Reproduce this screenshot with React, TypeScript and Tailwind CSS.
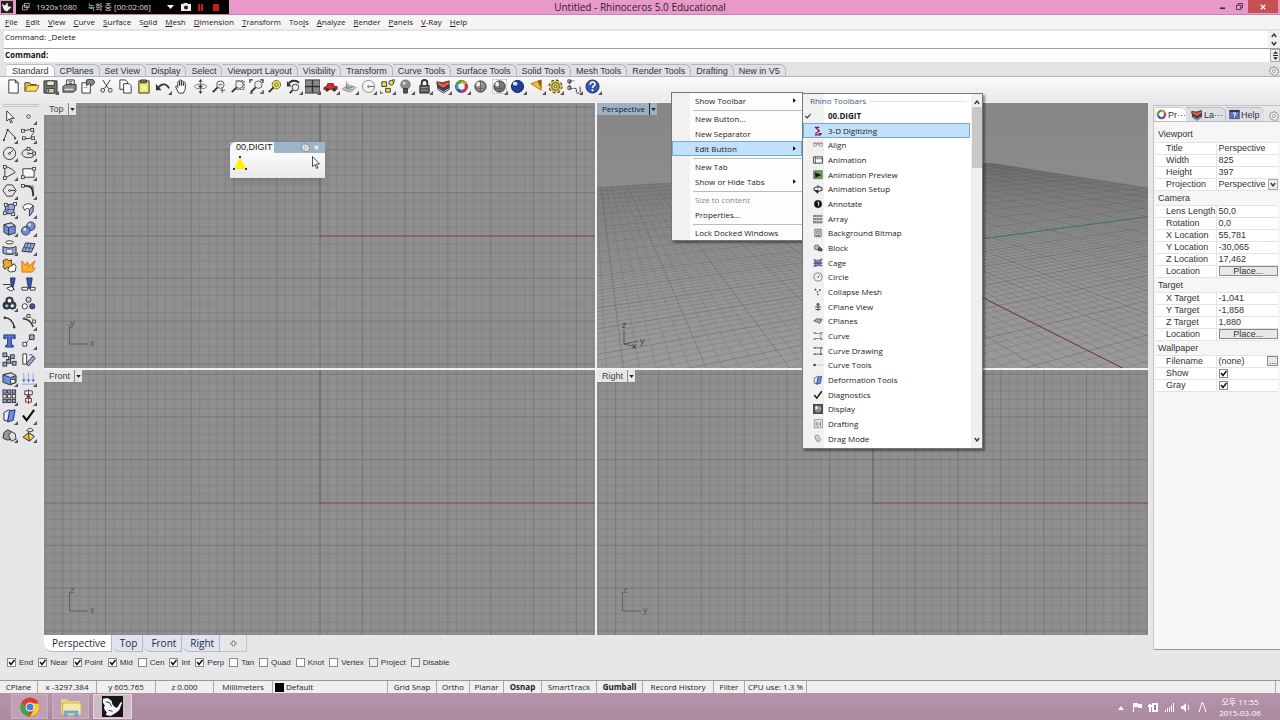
import type { ReactNode } from "react";
import clsx from "clsx";

const MENUS = ["File", "Edit", "View", "Curve", "Surface", "Solid", "Mesh", "Dimension", "Transform", "Tools", "Analyze", "Render", "Panels", "V-Ray", "Help"];
// position of the underlined access key in each menu label
const ACCESS_KEYS = [0, 0, 0, 0, 0, 1, 0, 0, 0, 3, 0, 0, 0, 0, 0];

const TOOL_TABS = ["Standard", "CPlanes", "Set View", "Display", "Select", "Viewport Layout", "Visibility", "Transform", "Curve Tools", "Surface Tools", "Solid Tools", "Mesh Tools", "Render Tools", "Drafting", "New in V5"];

const UI = "font-['Open_Sans','Noto_Sans_CJK_KR',sans-serif]";
const GULIM = "font-['Liberation_Sans',sans-serif]";

/* ---------- icons ---------- */

const K = "#333";

function Ico({ children, size = "size-[15px]" }: { children: ReactNode; size?: string }) {
    return (
        <svg viewBox="0 0 16 16" className={clsx("shrink-0", size)} fill="none" stroke={K} strokeWidth="1" aria-hidden="true">
            {children}
        </svg>
    );
}

const sphere = (fill: string) => (
    <>
        <circle cx="8" cy="8" r="6" fill={fill} />
        <path d="M8 2v12M2.500 9c3 2 8 2 11 0" stroke="#555" strokeWidth=".8" />
        <ellipse cx="5.500" cy="5.500" rx="2" ry="2.500" fill="#fff" stroke="none" opacity=".85" />
    </>
);

const colorWheel = (
    <g strokeWidth="3">
        <path d="M8 3a5 5 0 0 1 4.300 2.500" stroke="#e8a020" />
        <path d="M12.300 5.500a5 5 0 0 1 0 5" stroke="#d33" />
        <path d="M12.300 10.500A5 5 0 0 1 8 13" stroke="#c02a9a" />
        <path d="M8 13a5 5 0 0 1-4.300-2.500" stroke="#2b48c8" />
        <path d="M3.700 10.500a5 5 0 0 1 0-5" stroke="#28a8b0" />
        <path d="M3.700 5.500A5 5 0 0 1 8 3" stroke="#4bb034" />
        <circle cx="8" cy="8" r="6.500" strokeWidth=".7" />
    </g>
);

const layers = (
    <>
        <path d="M2 8v3l6 4 6-4V8" fill="#e4e4e4" />
        <path d="M1 4l1 5 6 4 6-4V6" fill="#234a9c" />
        <path d="M1 3l6 1 7-2v4l-6 4-6-3z" fill="#e0401c" />
        <path d="M2 4l6 4 6-4" stroke="#f7a58c" strokeWidth=".8" />
    </>
);

const gear = (
    <>
        <path
            d="M7 1h2l.5 2 1.500.6 1.800-1 1.400 1.400-1 1.800.6 1.500 2 .5v2l-2 .5-.6 1.500 1 1.800-1.400 1.400-1.800-1-1.500.6L9 15H7l-.5-2-1.500-.6-1.800 1-1.400-1.400 1-1.800L2.200 9 .5 8.500v-2L2.500 6l.6-1.200-1-1.800 1.400-1.400 1.800 1L6.500 3z"
            fill="#f4f4f4"
            stroke="#666"
        />
        <circle cx="8" cy="8" r="2.500" stroke="#777" />
    </>
);

const lens = <><circle cx="10" cy="6" r="4" fill="#e9eef2" stroke="#555" /><path d="M7 9l-5 5" strokeWidth="2" /></>;

const TOP_ICONS: { name: string; art: ReactNode; fly?: boolean }[] = [
    { name: "New", art: <path d="M3 1h7l3 3v11H3zM10 1v3h3" fill="#fff" /> },
    { name: "Open", art: <><path d="M1 13V4h5l1 2h6v2" fill="#f6c94a" /><path d="M1 13l3-6h12l-3 6z" fill="#fbe060" stroke="#8a6a12" /></> },
    { name: "Save", fly: true, art: <><path d="M1 2h14v13H1z" fill="#76796b" /><path d="M4 2h8v5H4z" fill="#e9e9dc" /><path d="M4 10h8v5H4z" fill="#c9cbb9" /><path d="M6 11v3" /></> },
    { name: "Print", art: <><path d="M5 7V1h8v6" fill="#fff" /><path d="M1 8l3-2h11v6l-3 2H1z" fill="#8c8c8c" /><path d="M3 11h9" stroke="#fff" /><path d="M7 3h4M7 5h4" /></> },
    { name: "Properties", art: <><path d="M2 4h9v11H2z" fill="#fff" /><path d="M7 1l6-1 3 3-3 4-3-2-3 2z" fill="#888" /><path d="M4 9h4" stroke="#999" /></> },
    { name: "Cut", art: <><path d="M4 1l6 9M12 1L6 10" /><circle cx="4" cy="12" r="2" /><circle cx="12" cy="12" r="2" /></> },
    { name: "Copy", art: <><path d="M2 1h6l2 2v8H2z" fill="#fff" /><path d="M6 5h6l2 2v8H6z" fill="#fff" /></> },
    { name: "Paste", art: <><path d="M3 2h11v13H3z" fill="#e6dc44" /><path d="M5 1h6v3H5z" fill="#777" /><path d="M5 6h7v7H5z" fill="#f5ee9a" stroke="none" /></> },
    { name: "Undo", fly: true, art: <><path d="M4 9c2-4 8-5 11 1" strokeWidth="2" /><path d="M1 5v7h6z" fill={K} stroke="none" /></> },
    { name: "Pan", art: <path d="M5 15L2 9c-1-2 1-2 2 0V4c0-2 2-2 2 0v3-5c0-2 2-1 2 0v5-4c0-2 2-1 2 0v4-3c1-1 2-1 2 1v6l-2 4z" fill="#fff" /> },
    { name: "Rotate View", art: <><path d="M8 1v14" stroke="#777" /><ellipse cx="8" cy="8" rx="6.500" ry="2.500" stroke="#777" /><path d="M6 3l2-3 2 3zM6 13l2 3 2-3z" fill={K} stroke="none" /><path d="M6 8h4M8 6v4" strokeWidth="1.500" /></> },
    { name: "Zoom Dynamic", art: <>{lens}<path d="M8 6h4M10 12h5M12 10v5" strokeWidth=".8" /></> },
    { name: "Zoom Window", art: <><path d="M6 2h9v9H6" strokeDasharray="2 1" />{lens}</> },
    { name: "Zoom Extents", art: <>{lens}<path d="M1 4V1h3M12 1h3v3M15 12v3h-3M4 15H1" strokeWidth="1.400" /></> },
    { name: "Zoom Selected", art: <><circle cx="10" cy="6" r="4.500" fill="#f4ee2e" stroke="#666" /><circle cx="10" cy="6" r="2" fill="#d7cf52" stroke="#777" /><path d="M7 9l-5 5" strokeWidth="2" /></> },
    { name: "Undo View", fly: true, art: <><path d="M3 5c2-4 8-4 11-1" strokeWidth="2" /><path d="M1 2v6h5z" fill={K} stroke="none" /><circle cx="10" cy="9" r="3.500" fill="#eee" /><path d="M7 12l-3 3" strokeWidth="2" /></> },
    { name: "Four Viewports", fly: true, art: <><path d="M0 1h16v14H0z" fill="#8a8a8a" /><path d="M0 8h16M8 1v14" strokeWidth="1.500" /></> },
    { name: "Right View", fly: true, art: <><path d="M1 9l3-1 1-3h6l1 3h3v3H1z" fill="#d43030" stroke="#7c1414" /><circle cx="4.500" cy="11.500" r="1.500" fill="#333" /><circle cx="12" cy="11.500" r="1.500" fill="#333" /></> },
    { name: "Set CPlane", fly: true, art: <><path d="M0 11l6-5 9 3-6 5z" fill="#ccc" stroke="#999" /><path d="M3 9l9 3M8 7l-5 5M11 8l-5 5" stroke="#888" strokeWidth=".7" /><path d="M5 3v7l7-2" stroke="#777" /></> },
    { name: "Circle Tool", fly: true, art: <><circle cx="8" cy="8" r="6.500" stroke="#888" /><circle cx="8" cy="8" r="1" stroke="#666" /><path d="M8 8h6" stroke="#666" /></> },
    { name: "Select", fly: true, art: <><path d="M2 3h5v5H2z" fill="#f3e235" /><circle cx="12" cy="4" r="2.500" fill="#f3e235" /><path d="M6 10h5v4H6z" fill="#f3e235" /><path d="M0 15v-3M0 15h3M13 1h3v3" /></> },
    { name: "Hide", fly: true, art: <><circle cx="8" cy="6" r="5" fill="#8d8d8d" stroke="#666" /><path d="M6 10h4v5H6z" fill="#555" /><circle cx="6.500" cy="4.500" r="1.500" fill="#ddd" stroke="none" /></> },
    { name: "Lock", fly: true, art: <><path d="M5 8V4c0-4 6-4 6 0v4" strokeWidth="2" /><path d="M3 7h10v8H3z" fill="#555" /><path d="M4 9h8M4 12h8" stroke="#999" /></> },
    { name: "Layers", fly: true, art: layers },
    { name: "Object Color", fly: true, art: colorWheel },
    { name: "Shade", art: sphere("#8f8f8f") },
    { name: "Shaded Viewport", fly: true, art: <><rect x=".5" y=".5" width="15" height="15" stroke="#aaa" strokeDasharray="1 1" />{sphere("#777")}</> },
    { name: "Render", fly: true, art: <><circle cx="8" cy="8" r="6.500" fill="#1d3f9e" stroke="#0d1c4f" /><ellipse cx="5.500" cy="5" rx="2.500" ry="2" fill="#dfe9ff" stroke="none" /></> },
    { name: "Spotlight", fly: true, art: <><path d="M2 5l11-4v11z" fill="#f0b93a" stroke="#b67b12" /><path d="M9 2l4-1v9z" fill="#8b5a1a" stroke="none" /></> },
    { name: "Options", fly: true, art: <><circle cx="8" cy="8" r="5.500" strokeWidth="4" strokeDasharray="2.300 2" /><circle cx="8" cy="8" r="5.500" strokeWidth="2" stroke="#e2c93b" /><circle cx="8" cy="8" r="4" fill="#e8d768" stroke="#665a10" /><circle cx="8" cy="8" r="1.500" fill="#fff" /></> },
    { name: "Dimension", fly: true, art: <><path d="M3 2v8M3 2h5M3 10h7v5h5" strokeDasharray="3 1" /><path d="M1 1h3v3H1zM1 8h3v3H1zM14 8v6" /></> },
    { name: "Help", fly: true, art: <><circle cx="8" cy="8" r="7" fill="#3a55b4" stroke="#1b2c70" /><path d="M5.500 6c0-4 6-3.500 5 0-.4 1.500-2.500 1.500-2.500 3.500M8 11v2" stroke="#fff" strokeWidth="1.800" /></> },
];

const node = (x: number, y: number) => <rect key={`${x}-${y}`} x={x - 1.5} y={y - 1.5} width="3" height="3" fill="#fff" strokeWidth=".9" />;
const curveArt = <><path d="M3 4c12-3 12 0 9 4s2 5-9 4" />{node(2, 4)}{node(12, 3)}{node(13, 12)}{node(3, 12)}</>;
const BLUE = "#93a9e6";
const deform = <><path d="M2 5l5-3 2 1-3 11-4-1z" fill="#e4e8f6" /><path d="M8 3l6-1-2 11-6 2z" fill="#6e8be0" stroke="#1d2f75" /></>;

const SIDE_ICONS: { name: string; art: ReactNode; fly?: boolean }[] = [
    { name: "Pointer", art: <path d="M5 2v11l2.500-2.500 2 4.500 1.500-1-2-4h4z" fill="#fff" /> },
    { name: "Point", fly: true, art: <circle cx="8" cy="8" r="1.800" fill="#fff" /> },
    { name: "Polyline", fly: true, art: <><path d="M2 14L6 3l8 8" /><path d="M1 13h2v2H1zM5 2h2v2H5zM13 11h2v2h-2z" fill={K} stroke="none" /></> },
    { name: "Curve", fly: true, art: curveArt },
    { name: "Circle", fly: true, art: <><circle cx="8" cy="8" r="6.500" /><path d="M8 8l4-4" /><circle cx="8" cy="8" r="1" fill="#fff" /></> },
    { name: "Ellipse", fly: true, art: <><ellipse cx="8" cy="8" rx="7" ry="4.500" />{node(8, 3)}<path d="M8 8h5" /><circle cx="8" cy="8" r="1" fill="#fff" />{node(14, 8)}</> },
    { name: "Arc", fly: true, art: <><path d="M3 2v12M3 2c5 0 9 3 11 6L3 14" />{node(3, 2)}{node(3, 14)}</> },
    { name: "Rectangle", fly: true, art: <><path d="M2 4h12v9H2z" fill="#f7f7f7" />{node(2, 13)}{node(14, 4)}</> },
    { name: "Polygon", fly: true, art: <><path d="M5 2h6l4 6-4 6H5L1 8z" /><path d="M8 8h6" /><circle cx="8" cy="8" r="1" fill="#fff" /></> },
    { name: "Fillet", fly: true, art: <><path d="M2 3h3c6 0 8 3 8 11" strokeWidth="2" />{node(2, 3)}<path d="M8 3h5v5" strokeDasharray="2 1" /></> },
    { name: "Surface Points", fly: true, art: <><path d="M4 3l10-1-2 11-9-1z" fill={BLUE} /><path d="M7 3L6 13M3 8h10" strokeWidth=".6" />{node(4, 3)}{node(14, 2)}{node(12, 13)}{node(3, 12)}</> },
    { name: "Surface Sweep", fly: true, art: <><path d="M2 5c3-4 7-4 11-1l-4 4c-2-2-4-1-5 1z" fill="#fff" /><path d="M13 4v6l-4 5V8z" fill={BLUE} /></> },
    { name: "Box", fly: true, art: <><path d="M2 4l8-2 4 3v8l-7 2-5-3z" fill="#6f8ee0" /><path d="M2 4l8-2 4 3-7 2z" fill="#c3d0f7" /><path d="M7 7v8" /></> },
    { name: "Boolean Union", fly: true, art: <><circle cx="10.500" cy="5.500" r="4.500" fill="#6f8ee0" /><circle cx="5" cy="10.500" r="4.500" fill="#6f8ee0" /><circle cx="9" cy="4" r="1.500" fill="#e5ecff" stroke="none" /><circle cx="4" cy="9" r="1.500" fill="#e5ecff" stroke="none" /></> },
    { name: "Loft", fly: true, art: <><ellipse cx="8" cy="2.500" rx="4" ry="1.700" fill="#fff" /><path d="M1 7c4 2 10 2 14 0v7c-4 2-10 2-14 0z" fill={BLUE} /><path d="M5 10h6v4H5z" fill="#fff" strokeWidth=".6" /></> },
    { name: "Patch", fly: true, art: <><path d="M5 3l10 1-4 9-10-1z" fill={BLUE} /><path d="M8 3.500L4 12M11 3.500L8 13M3 8l10 1" strokeWidth=".7" /></> },
    { name: "Join", art: <><path d="M1 3l4-2 2 2 3-1v4l2 1-3 4-3-1-3 2-2-3 1-2z" fill="#f1a92b" /><path d="M8 9l3-1 2-2 2 3-1 5-5 1-3-2z" fill="#fff" /></> },
    { name: "Explode", art: <path d="M1 15V3l4 5 2-4 1 5 7-6-3 7 3 1-3 4z" fill="#ffb32c" stroke="#e2660c" /> },
    { name: "Trim", art: <><path d="M9 1h5l-2 10h-2z" fill="#2f55c8" /><path d="M1 8h8l4 6" /><path d="M5 12l5-2 3 3-4 2z" fill="#fff" /></> },
    { name: "Split", art: <><path d="M6 1h6l-2 11H8z" fill="#2f55c8" /><path d="M1 11h6v3H1zM10 11h5v3h-5z" fill="#fff" /></> },
    { name: "Group", fly: true, art: <><circle cx="8" cy="5" r="4" fill="#345" /><circle cx="5" cy="10" r="4" fill="#234" /><circle cx="11" cy="10" r="4" fill="#345" /><circle cx="8" cy="5" r="2" fill="#fff" stroke="none" /><circle cx="5" cy="10.500" r="1.800" fill="#9fb4f0" stroke="none" /><circle cx="11" cy="10.500" r="1.800" fill="#fff" stroke="none" /></> },
    { name: "Ungroup", art: <><circle cx="8" cy="4" r="2.800" fill="#b9c6f2" /><circle cx="4" cy="11" r="2.800" fill="#fff" /><circle cx="12" cy="11" r="2.800" fill="#3c56a8" /></> },
    { name: "Edit Curve", art: <><path d="M3 4c5 0 9 4 10 10" strokeWidth="1.500" /><circle cx="3" cy="4" r="1" fill={K} /><circle cx="13" cy="14" r="1" fill={K} /></> },
    { name: "Control Points", fly: true, art: <><path d="M2 5c5 0 9 3 11 9" strokeWidth="1.500" /><path d="M2 5l6-4 6 6" strokeDasharray="1 1" />{node(8, 2)}{node(14, 8)}</> },
    { name: "Text", art: <path d="M2 2h12v4h-2l-1-1h-1v8h2v2H4v-2h2V5H5L4 6H2z" fill="#5578d8" stroke="#1d2f75" /> },
    { name: "Move", fly: true, art: <><path d="M9 2h5v5H9z" fill={BLUE} /><path d="M2 10h4v4H2z" fill="#fff" /><path d="M6 10l4-4" strokeDasharray="2 1" /></> },
    { name: "Copy Objects", art: <>{[[1, 1], [9, 3], [5, 8], [11, 10], [1, 11]].map(([x, y]) => <rect key={`${x}${y}`} x={x} y={y} width="4" height="4" fill={BLUE} />)}<path d="M5 4l4 2M7 8v-3M9 11l2 1" /></> },
    { name: "Rotate", art: <><path d="M2 2h4v11H2z" fill="#fff" /><path d="M6 12l7-8 2 3-7 8z" fill={BLUE} /><path d="M9 3h3" /></> },
    { name: "Solid Edit", fly: true, art: <><path d="M1 4l9-2 5 3v7l-6 3-8-3z" fill="#6f8ee0" /><path d="M1 4l9-2 5 3-6 2z" fill="#d2dcfa" /><path d="M9 9h5v4H9z" fill="#fff" /></> },
    { name: "Project", fly: true, art: <><path d="M3 2v8M8 2v8M13 2v8" stroke="#8aa6e8" /><path d="M1 9l2 3 2-3zM6 9l2 3 2-3zM11 9l2 3 2-3z" fill="#4c6ed6" stroke="none" /><path d="M1 14h14" stroke="#8aa6e8" /></> },
    { name: "Array", fly: true, art: <>{[1, 6, 11].flatMap((y) => [1, 6, 11].map((x) => <rect key={`${x}${y}`} x={x} y={y} width="3.500" height="3.500" fill={y === 6 ? "#fff" : BLUE} />))}</> },
    { name: "Align", fly: true, art: <><path d="M4 2h4v4H4zM8 2h4v4H8zM5 10h6v4H5z" fill="#fff" /><path d="M8 0v16" stroke="#d22" /><path d="M6 8h4" strokeWidth="2" /></> },
    { name: "Deform", fly: true, art: deform },
    { name: "Check", fly: true, art: <path d="M2 8l4 5 8-11" strokeWidth="2.200" stroke="#111" /> },
    { name: "Block", fly: true, art: <><path d="M1 12l1-6 4-3 4 2v8l-4 1z" fill="#999" /><path d="M7 9l3-4 4 2 1 6-5 2z" fill="#ddd" /></> },
    { name: "Dimension Tools", fly: true, art: <><path d="M2 11l6-5 6 4-5 5z" fill="#f1b73b" /><path d="M8 6l6 4-5 5z" fill="#fbe08b" /><path d="M6 4c3-4 6-3 7 0l-3 1z" fill="#eee" /></> },
];

const MENU_ICONS: { name: string; art: ReactNode }[] = [
    { name: "3-D Digitizing", art: <path d="M3 2h7M4 2l6 6-6 4M3 14h10M9 12h5" stroke="#8a1240" strokeWidth="2" /> },
    { name: "Align", art: <><path d="M0 5h16" stroke="#c33" /><path d="M1 5h4v5H1zM6 5h4v3H6zM11 5h4v5h-4z" stroke="#888" /></> },
    { name: "Animation", art: <><path d="M1 3h14v10H1z" fill="#fff" strokeWidth="1.500" /><path d="M4 3v10M4 6h11" /></> },
    { name: "Animation Preview", art: <><path d="M1 1h14v13H1z" fill="#6ea255" stroke="#4b6e3a" /><path d="M3 4l10 4-9 4z" fill="#111" /></> },
    { name: "Animation Setup", art: <><ellipse cx="8" cy="8" rx="6.500" ry="3.500" strokeWidth="1.700" /><path d="M8 1v6M8 15l-4-3 4-3z" fill="#111" /></> },
    { name: "Annotate", art: <><circle cx="8" cy="8" r="6" fill="#111" /><path d="M7 5h2v6" stroke="#fff" strokeWidth="1.500" /></> },
    { name: "Array", art: <>{[2, 7, 12].flatMap((y) => [1, 6, 11].map((x) => <rect key={`${x}${y}`} x={x} y={y} width="3.500" height="2.500" fill="#999" stroke="#777" />))}</> },
    { name: "Background Bitmap", art: <><path d="M3 2h10v12H3z" fill="#ddd" /><circle cx="8" cy="7" r="2.500" /><path d="M5 12h6" /></> },
    { name: "Block", art: <><circle cx="6" cy="7" r="4" fill="#bbb" /><path d="M8 12l2-6 5 4-1 3z" fill="#555" /></> },
    { name: "Cage", art: <><path d="M3 4l10-1-1 9-9 1z" fill="#7f86b8" stroke="#444b7c" /><path d="M1 3h3M12 2h3M1 13h3M12 12h3M1 8h14" stroke="#444b7c" strokeWidth="2" /></> },
    { name: "Circle", art: <><circle cx="8" cy="8" r="6.500" stroke="#444" /><path d="M8 8l3-3M7 8h3" /></> },
    { name: "Collapse Mesh", art: <><circle cx="4" cy="4" r="1" fill="#446" /><circle cx="11" cy="5" r="1" fill="#446" /><path d="M6 7l2 2" stroke="#446" strokeWidth="2" /><circle cx="8" cy="12" r=".8" fill="#446" /></> },
    { name: "CPlane View", art: <><circle cx="8" cy="4" r="2" fill="#777" /><path d="M8 6v8M3 8h10M4 12h8" strokeWidth="1.500" stroke="#444" /></> },
    { name: "CPlanes", art: <><path d="M1 8l5-4 9 1-4 7z" fill="#777" stroke="#666" /><path d="M4 6l8 4M8 4l-3 5M12 5l-4 5" stroke="#ddd" /></> },
    { name: "Curve", art: <g stroke="#555"><path d="M3 4h8c4 0 0 5 2 8H3" /><path d="M1 3h3M12 3h3M1 13h3M12 13h3" strokeWidth="2" /></g> },
    { name: "Curve Drawing", art: <g stroke="#444"><path d="M3 3h9c3 0-2 7 1 10H3" strokeWidth="1.300" /><path d="M1 3h3M12 3h3M1 13h3M12 13h3" strokeWidth="2.200" /></g> },
    { name: "Curve Tools", art: <><path d="M1 7h3v2H1z" fill="#111" /><path d="M6 8h10" stroke="#888" strokeDasharray="2 1" /></> },
    { name: "Deformation Tools", art: deform },
    { name: "Diagnostics", art: <path d="M2 8l4 5 8-11" strokeWidth="2.200" stroke="#111" /> },
    { name: "Display", art: <><path d="M0 0h16v16H0z" fill="#555" stroke="#333" />{sphere("#aaa")}</> },
    { name: "Drafting", art: <><path d="M2 1h13v13H2z" fill="#f2f2f2" stroke="#666" /><path d="M5 4v8M12 4v8M5 8h7M8 4v2M8 10v3" stroke="#555" /></> },
    { name: "Drag Mode", art: <><path d="M3 3l5-1 4 7-3 4-4-3z" fill="#eee" stroke="#555" /><path d="M6 5l3 6" stroke="#666" /></> },
];

/* ---------- viewport drawings ---------- */

const EXTENT = 70;
const UNIT = 8.56;
const STEPS = Array.from({ length: EXTENT * 2 + 1 }, (_, i) => i - EXTENT);

const flatPath = (major: boolean) =>
    STEPS.filter((n) => n !== 0 && (n % 5 === 0) === major)
        .map((n) => `M${n * UNIT} ${-EXTENT * UNIT}V${EXTENT * UNIT}M${-EXTENT * UNIT} ${n * UNIT}H${EXTENT * UNIT}`)
        .join("");
const FLAT_MINOR = flatPath(false);
const FLAT_MAJOR = flatPath(true);

// Perspective camera, 50 mm lens, looking at the target
const CAM = [55.781, -30.065, 17.462];
const FWD = [-0.8699, 0.4318, -0.2385];
const RIGHT = [0.4446, 0.8957, 0];
const UP = [-0.2136, 0.106, 0.9711];
const FOCAL = 552;
const NEAR = 3;

function toCamera(x: number, y: number) {
    const d = [x - CAM[0], y - CAM[1], -CAM[2]];
    const dot = (v: number[]) => d[0] * v[0] + d[1] * v[1] + d[2] * v[2];
    return [dot(RIGHT), dot(UP), dot(FWD)];
}

function project(x1: number, y1: number, x2: number, y2: number) {
    let a = toCamera(x1, y1);
    let b = toCamera(x2, y2);
    if (a[2] < NEAR && b[2] < NEAR) return "";
    const clip = (p: number[], q: number[]) => {
        const t = (NEAR - p[2]) / (q[2] - p[2]);
        return p.map((v, i) => v + (q[i] - v) * t);
    };
    if (a[2] < NEAR) a = clip(a, b);
    if (b[2] < NEAR) b = clip(b, a);
    const px = (p: number[]) => `${((p[0] / p[2]) * FOCAL).toFixed(1)} ${((-p[1] / p[2]) * FOCAL).toFixed(1)}`;
    return `M${px(a)}L${px(b)}`;
}

const perspPath = (major: boolean) =>
    STEPS.filter((n) => (n % 5 === 0) === major)
        .map((n) => project(n, -EXTENT, n, EXTENT) + project(-EXTENT, n, EXTENT, n))
        .join("");
const PERSP_MINOR = perspPath(false);
const PERSP_MAJOR = perspPath(true);

function FlatGrid({ h, v }: { h: string; v: string }) {
    return (
        <svg className="block size-full bg-[#8f8f8f]" aria-hidden="true">
            <svg x="50%" y="50%" overflow="visible" fill="none">
                <path d={FLAT_MINOR} stroke="#848484" />
                <path d={FLAT_MAJOR} stroke="#787878" />
                <path d="M-600 .500H0M.500 0V600" stroke="#707070" />
                <path d="M0 .500H600" stroke="#7c3e46" />
                <path d="M.500 0V-600" stroke="#3d6b3f" />
            </svg>
            <svg x="0" y="100%" overflow="visible" fill="none" stroke="#5f5f5f">
                <path d="M25.500-43v19H44" />
                <text x="26" y="-42" fill="#555" stroke="none" className="font-['Liberation_Sans'] text-[9px]">{v}</text>
                <text x="46" y="-22" fill="#555" stroke="none" className="font-['Liberation_Sans'] text-[9px]">{h}</text>
            </svg>
        </svg>
    );
}

function PerspectiveGrid() {
    return (
        <svg className="block size-full bg-linear-to-b from-[#868686] to-[#9a9a9a]" aria-hidden="true">
            <svg x="50%" y="50%" overflow="visible" fill="none">
                <path d={PERSP_MINOR} stroke="#5c5c5c" strokeOpacity=".24" />
                <path d={PERSP_MAJOR} stroke="#4c4c4c" strokeOpacity=".32" />
                <path d={project(0, 0, EXTENT, 0)} stroke="#7c2f38" />
                <path d={project(0, 0, 0, EXTENT)} stroke="#3d7a45" />
            </svg>
            <svg x="0" y="100%" overflow="visible" fill="none" stroke="#555">
                <path d="M27-38v14l12 3M27-24l14-3" />
                <text x="25" y="-40" fill="#444" stroke="none" className="font-['Liberation_Sans'] text-[9px]">z</text>
                <text x="43" y="-24" fill="#444" stroke="none" className="font-['Liberation_Sans'] text-[9px]">y</text>
                <text x="35" y="-19" fill="#444" stroke="none" className="font-['Liberation_Sans'] text-[9px]">x</text>
            </svg>
        </svg>
    );
}

function Viewport({ title, active, children }: { title: string; active?: boolean; children: ReactNode }) {
    return (
        <section className="relative min-h-0 min-w-0 overflow-hidden">
            <div className="absolute inset-0">{children}</div>
            <button
                className={clsx(
                    "absolute left-0 top-0 flex h-3 items-center gap-[4px] pl-[5px] leading-3",
                    active ? `bg-[#9fb0c3] text-[8px] text-[#101c33] ${UI}` : `bg-[#e6e6e6] text-[9px] text-[#444] ${GULIM}`
                )}
            >
                {title}
                <span className={clsx("flex h-3 w-2 items-center justify-center border-l", active ? "border-[#223]" : "border-[#888]")}>
                    <svg viewBox="0 0 6 4" className="h-[3px] w-[5px]" aria-hidden="true"><path d="M0 0h6L3 4z" fill="#222" /></svg>
                </span>
            </button>
        </section>
    );
}

/* ---------- shared controls ---------- */

function Tick({ label, checked, dim, children }: { label: string; checked?: boolean; dim?: boolean; children?: ReactNode }) {
    return (
        <label className="flex items-center gap-[3px]">
            <span className="grid">
                <input
                    type="checkbox"
                    aria-label={label}
                    defaultChecked={checked}
                    className={clsx("peer col-start-1 row-start-1 size-[9px] appearance-none border border-[#888]", dim ? "bg-[#eee]" : "bg-white")}
                />
                <svg viewBox="0 0 9 9" className="pointer-events-none invisible col-start-1 row-start-1 size-[9px] peer-checked:visible" aria-hidden="true">
                    <path d="M2 4l2 2.500L7.500 2" fill="none" stroke="#111" strokeWidth="1.500" />
                </svg>
            </span>
            {children}
        </label>
    );
}

function IconButton({ name, art, fly }: { name: string; art: ReactNode; fly?: boolean }) {
    return (
        <button aria-label={name} className="relative grid h-[18px] w-[18px] place-items-center">
            <Ico>{art}</Ico>
            {fly && (
                <svg viewBox="0 0 4 4" className="absolute bottom-0 right-0 size-1" aria-hidden="true">
                    <path d="M4 0v4H0z" fill="#555" />
                </svg>
            )}
        </button>
    );
}

function Gear() {
    return <button aria-label="Panel options" className="shrink-0"><Ico size="size-[10px]">{gear}</Ico></button>;
}

/* ---------- window chrome ---------- */

function TitleBar() {
    return (
        <header className="flex h-[15px] shrink-0 items-start border-b border-[#b98aa6] bg-[#e899c9] leading-[14px]">
            <div className="flex flex-1 items-center">
                <svg viewBox="0 0 16 16" className="ml-px mr-[3px] size-3" aria-hidden="true">
                    <path d="M0 0h16v16H0z" fill="#222" />
                    <path d="M1 4l4 2 4-4v5l5 1-6 6-4-2z" fill="#f2f2f2" />
                </svg>
                <div className={`flex h-[14px] w-[213px] items-center bg-black text-[8px] text-[#ddd] ${UI}`}>
                    <svg viewBox="0 0 10 10" className="ml-[6px] mr-[6px] size-2" fill="none" stroke="#ccc" aria-hidden="true">
                        <path d="M3 .500h6v5H3zM.500 3.500h6v5h-6z" />
                    </svg>
                    <span>1920x1080</span>
                    <span className="ml-[11px]">녹화 중 [00:02:06]</span>
                    <svg viewBox="0 0 60 10" className="ml-auto mr-[8px] h-[10px] w-[60px]" aria-hidden="true">
                        <path d="M6 3h7l-3.500 4z" fill="#fff" />
                        <path d="M20 2h2l1-1h3l1 1h3v7H20z" fill="#eee" />
                        <circle cx="25" cy="5.500" r="2" fill="#222" />
                        <path d="M37 2h2v7h-2zM40 2h2v7h-2zM52 2h6v7h-6z" fill="#d01818" />
                    </svg>
                </div>
            </div>
            <h1 className={`text-[10px] text-[#2c1c28] ${UI}`}>Untitled - Rhinoceros 5.0 Educational</h1>
            <div className="flex flex-1 justify-end">
                <button aria-label="Minimize" className="grid h-[13px] w-[17px] place-items-center">
                    <svg viewBox="0 0 8 8" className="size-[7px]" aria-hidden="true"><path d="M1 5h6v2H1z" fill="#4c2f42" /></svg>
                </button>
                <button aria-label="Restore" className="grid h-[13px] w-[17px] place-items-center">
                    <svg viewBox="0 0 8 8" className="size-[7px]" fill="none" stroke="#3c2434" aria-hidden="true"><path d="M2.500 2V.500h5v5H6M.500 2.500h5v5h-5z" /></svg>
                </button>
                <button aria-label="Close" className="mr-0.5 grid h-[13px] w-[30px] place-items-center bg-[#c75050]">
                    <svg viewBox="0 0 8 8" className="size-[6px]" stroke="#fff" strokeWidth="1.500" aria-hidden="true"><path d="M1 1l6 6M7 1L1 7" /></svg>
                </button>
            </div>
        </header>
    );
}

function MenuBar() {
    return (
        <nav className={`flex h-[14px] shrink-0 items-center gap-2 bg-[#f4f4f4] pl-[5px] text-[8px] text-[#222] ${UI}`}>
            {MENUS.map((m, i) => (
                <button key={m}>
                    {m.slice(0, ACCESS_KEYS[i])}
                    <u>{m[ACCESS_KEYS[i]]}</u>
                    {m.slice(ACCESS_KEYS[i] + 1)}
                </button>
            ))}
        </nav>
    );
}

function Chevron({ up }: { up?: boolean }) {
    return (
        <svg viewBox="0 0 8 6" className="h-[5px] w-[6px]" fill="none" stroke="#333" strokeWidth="1.700" aria-hidden="true">
            <path d={up ? "M1 5l3-4 3 4" : "M1 1l3 4 3-4"} />
        </svg>
    );
}

function CommandLine() {
    return (
        <div className={`shrink-0 bg-[#e4e4e4] pt-0.5 pb-0.5 pl-1 text-[8px] text-[#111] ${UI}`}>
            <div className="flex h-[18px] border-b border-[#a0a0a0] bg-white">
                <p className="flex-1 pl-px leading-3">Command: _Delete</p>
                <div className="flex w-3 flex-col items-center justify-around bg-[#f0f0f0]">
                    <button aria-label="Scroll up"><Chevron up /></button>
                    <button aria-label="Scroll down"><Chevron /></button>
                </div>
            </div>
            <div className="flex h-[13px] bg-white">
                <label htmlFor="command" className="pl-px font-bold leading-3">Command:</label>
                <input id="command" className="min-w-0 flex-1 pl-1 outline-none" />
                <div className="flex w-[10px] flex-col items-center justify-around border border-[#aaa] bg-[#eee]">
                    <svg viewBox="0 0 6 10" className="h-[9px] w-[5px]" aria-hidden="true"><path d="M3 0l3 3H0zM3 10l3-3H0zM0 4.500h6v1H0z" fill="#222" /></svg>
                </div>
            </div>
        </div>
    );
}

function Toolbar() {
    return (
        <div className="shrink-0">
            <div className="flex h-[13px] items-end justify-between border-b border-[#b5b5b5] bg-[#e3e3e5] pl-[7px] pr-px">
                <div className={`flex text-[9px] leading-3 text-[#333] ${GULIM}`}>
                    {TOOL_TABS.map((t, i) => (
                        <button
                            key={t}
                            className={clsx(
                                "h-3 whitespace-nowrap rounded-tr-md border-r border-t px-[5px]",
                                i === 0 ? "border-[#bbb] bg-white" : "border-[#b4b4c2] bg-[#dfe0e6]"
                            )}
                        >
                            {t}
                        </button>
                    ))}
                </div>
                <Gear />
            </div>
            <div className="h-[25px] bg-linear-to-b from-[#fafafa] to-[#e9e9ea]">
                <div className="flex w-[602px] justify-between pl-1">
                    {TOP_ICONS.map((t) => <IconButton key={t.name} {...t} />)}
                </div>
            </div>
        </div>
    );
}

/* ---------- properties panel ---------- */

const GROUPS: { title: string; rows: [string, string][] }[] = [
    { title: "Viewport", rows: [["Title", "Perspective"], ["Width", "825"], ["Height", "397"], ["Projection", "Perspective"]] },
    { title: "Camera", rows: [["Lens Length", "50,0"], ["Rotation", "0,0"], ["X Location", "55,781"], ["Y Location", "-30,065"], ["Z Location", "17,462"], ["Location", "Place..."]] },
    { title: "Target", rows: [["X Target", "-1,041"], ["Y Target", "-1,858"], ["Z Target", "1,880"], ["Location", "Place..."]] },
    { title: "Wallpaper", rows: [["Filename", "(none)"], ["Show", "on"], ["Gray", "on"]] },
];

function PropertyValue({ name, value }: { name: string; value: string }) {
    if (name === "Projection") {
        return (
            <div className="flex h-[11px] items-center">
                <select aria-label="Projection" className="w-[47px] flex-1 appearance-none leading-[11px]">
                    <option>Perspective</option>
                </select>
                <span className="grid h-[11px] w-[10px] place-items-center border border-[#aaa] bg-[#eee]"><Chevron /></span>
            </div>
        );
    }
    if (name === "Location") {
        return <button className="block h-[10px] w-full border border-[#888] bg-[#e8e8e8] text-center leading-2">{value}</button>;
    }
    if (name === "Filename") {
        return (
            <div className="flex h-[11px] items-center justify-between">
                {value}
                <button aria-label="Browse" className="h-[10px] w-[11px] border border-[#888] bg-[#e8e8e8] leading-[6px]">...</button>
            </div>
        );
    }
    if (value === "on") return <Tick label={name} checked />;
    return <>{value}</>;
}

function PropertiesPanel() {
    return (
        <aside className={`mb-[3px] mt-[3px] flex w-[127px] shrink-0 flex-col border-l border-t border-[#c4c4c8] bg-[#e8e8ea] text-[9px] text-[#333] ${GULIM}`}>
            <div className="mt-px flex h-[15px] items-end justify-between border-b border-[#bbb] pl-0.5 pr-px">
                <div className="flex items-end leading-3">
                    <button className="flex h-[14px] items-center gap-px rounded-tr-md border-t border-[#ccc] bg-white"><Ico size="size-[11px]">{colorWheel}</Ico>Pr···</button>
                    <button className="flex h-[14px] items-center gap-px rounded-tr-md border-r border-t border-[#bbb] bg-[#dedfe6] pl-[5px] pr-0.5"><Ico size="size-[12px]">{layers}</Ico>La···</button>
                    <button className="flex h-[14px] items-center gap-px rounded-tr-md border-t border-[#bbb] bg-[#dedfe6] pl-[3px] pr-[4px]">
                        <Ico size="size-[11px]"><path d="M1 2h14v12H1z" fill="#5b74c8" stroke="#334" /><path d="M1 3h14" stroke="#223" strokeWidth="2" /><path d="M6 7c0-2 4-2 4 0 0 1-2 1-2 3M8 11v1.500" stroke="#fff" strokeWidth="1.500" /></Ico>
                        Help
                    </button>
                </div>
                <Gear />
            </div>
            <div className="flex-1 border-b border-[#999] bg-[#f6f6f7] px-0.5 pt-[5px]">
                <table className="w-full table-fixed border-collapse bg-white">
                    <colgroup>
                        <col className="w-[60px]" />
                        <col />
                    </colgroup>
                    {GROUPS.map((g) => (
                        <tbody key={g.title}>
                            <tr className="h-[15px]">
                                <th colSpan={2} scope="rowgroup" className="bg-[#f6f6f7] p-0 pl-0.5 text-left font-normal leading-[14px]">{g.title}</th>
                            </tr>
                            {g.rows.map(([name, value], i) => (
                                <tr key={i} className="h-3">
                                    <th scope="row" className="whitespace-nowrap border-y border-[#e3e3e3] p-0 pl-[10px] text-left font-normal leading-[11px]">{name}</th>
                                    <td className="whitespace-nowrap border border-r-0 border-[#e3e3e3] p-0 pl-0.5 leading-[11px]">
                                        <PropertyValue name={name} value={value} />
                                    </td>
                                </tr>
                            ))}
                        </tbody>
                    ))}
                </table>
            </div>
        </aside>
    );
}

/* ---------- bottom bars ---------- */

const OSNAPS: [string, boolean][] = [
    ["End", true], ["Near", true], ["Point", true], ["Mid", true], ["Cen", false], ["Int", true], ["Perp", true],
    ["Tan", false], ["Quad", false], ["Knot", false], ["Vertex", false], ["Project", false], ["Disable", false],
];

const PANES: [string, string][] = [
    ["CPlane", "w-[38px]"], ["x -3297.384", "w-[59px]"], ["y 605.765", "w-[59px]"], ["z 0.000", "w-[58px]"], ["Millimeters", "w-[59px]"],
];

const TOGGLES: [string, string][] = [
    ["Grid Snap", "w-[49px]"], ["Ortho", "w-[33px]"], ["Planar", "w-[34px]"], ["Osnap", "w-[38px] font-bold"], ["SmartTrack", "w-[55px]"],
    ["Gumball", "w-[46px] font-bold"], ["Record History", "w-[71px]"], ["Filter", "w-[31px]"], ["CPU use: 1.3 %", "w-[62px]"],
];

function StatusBar() {
    return (
        <div className={`flex h-[13px] shrink-0 border-t border-[#999] bg-[#efeff0] text-[8px] leading-3 text-[#222] ${UI}`}>
            {PANES.map(([t, w]) => <div key={t} className={clsx("shrink-0 border-r border-[#aaa] text-center", w)}>{t}</div>)}
            <div className="flex w-[115px] items-center gap-0.5 border-r border-[#aaa] pl-0.5"><span className="size-[9px] bg-black" />Default</div>
            {TOGGLES.map(([t, w]) => <button key={t} className={clsx("shrink-0 whitespace-nowrap border-r border-[#aaa] text-center", w)}>{t}</button>)}
            <div className="mr-1 flex-1 border-r border-[#aaa]" />
        </div>
    );
}

function Taskbar() {
    return (
        <footer className="flex h-[27px] shrink-0 items-center bg-linear-to-b from-[#b793ab] to-[#a98aa0] pl-[11px]">
            <button aria-label="Chrome" className="mr-1 grid h-[25px] w-[37px] place-items-center border border-[#c9afc0] bg-[#bfa0b4]">
                <svg viewBox="0 0 20 20" className="size-5" aria-hidden="true">
                    <circle cx="10" cy="10" r="9.500" fill="#e23a2e" />
                    <path d="M1.800 5.200L8 14l2 5.500A9.500 9.500 0 0 1 1.800 5.200z" fill="#3fa447" />
                    <path d="M18.700 6.500H10l4 6-4 7a9.500 9.500 0 0 0 8.700-13z" fill="#f7cf2e" />
                    <circle cx="10" cy="10" r="4.500" fill="#fff" />
                    <circle cx="10" cy="10" r="3.500" fill="#3f7fd6" />
                </svg>
            </button>
            <button aria-label="Explorer" className="mr-1 grid h-[25px] w-[37px] place-items-center border border-[#c9afc0] bg-[#bfa0b4]">
                <svg viewBox="0 0 24 20" className="h-5 w-6" aria-hidden="true">
                    <path d="M2 2h6l1 2h12v14H2z" fill="#e6cf7d" />
                    <path d="M4 6h18v12H3z" fill="#f6e8a9" stroke="#cfb560" />
                    <path d="M5 19v-5h14v5h-3v-3H8v3z" fill="#6fb6e4" stroke="#4b8fc0" strokeWidth=".6" />
                </svg>
            </button>
            <button aria-label="Rhinoceros" className="grid h-[25px] w-[39px] place-items-center border border-[#e6d6e0] bg-[#cfbac8]">
                <svg viewBox="0 0 22 22" className="size-[21px]" aria-hidden="true">
                    <path d="M0 0h22v22H0z" fill="#161616" />
                    <path d="M1 3l5-1 4 3 1 4 3 3 2 0 4-6 1 1-3 8-4 3-5 3-5-1 1-3-2-2-1-3 1-2-2-3z" fill="#f4f4f4" />
                    <path d="M4 6l4 1 2 4M7 15l4 1" stroke="#333" fill="none" />
                </svg>
            </button>
            <div className="ml-auto flex items-center">
                <svg viewBox="0 0 96 14" className="mr-[10px] h-[14px] w-24" fill="#fff" aria-hidden="true">
                    <path d="M10 6l3 4H7z" />
                    <path d="M22 3h1v9h-1zM23 3h4v1h4v4h-4V7h-4z" />
                    <path d="M38 4h2v8h-2zM41 3h6v9h-6zM37 5h4v2h-4z" />
                    <path d="M43 5h2v5h-2z" fill="#9b7c92" />
                    <path d="M54 10h1v2h-1zM56 8h1v4h-1zM58 7h1v5h-1zM60 5h1v7h-1zM62 3h1v9h-1z" />
                    <path d="M70 6h2l3-3v9l-3-3h-2z" />
                    <path d="M77 5c1 1 1 4 0 5" fill="none" stroke="#fff" />
                    <path d="M88 12l3-9h1l3 9M91 3l-1 0" fill="none" stroke="#fff" />
                </svg>
                <div className={`mr-[17px] w-[46px] whitespace-nowrap text-center text-[8px] leading-[11px] text-white ${UI}`}>
                    <div>오후 11:55</div>
                    <div>2015-03-06</div>
                </div>
            </div>
        </footer>
    );
}

/* ---------- floating pieces ---------- */

function FloatingToolbar() {
    return (
        <div className="absolute left-[230px] top-[142px] w-[95px] shadow-md">
            <div className={`flex h-[11px] items-center bg-[#9fb3c9] text-[9px] leading-[11px] text-[#222] ${GULIM}`}>
                <span className="h-full w-[44px] whitespace-nowrap rounded-tl-md bg-[#f8f8f8] pl-1.5">00,DIGIT</span>
                <button aria-label="Toolbar options" className="ml-auto"><Ico size="size-[9px]">{gear}</Ico></button>
                <button aria-label="Close toolbar" className="ml-1 mr-1.5">
                    <svg viewBox="0 0 6 6" className="size-[5px]" stroke="#fff" strokeWidth="1.500" aria-hidden="true"><path d="M1 1l4 4M5 1L1 5" /></svg>
                </button>
            </div>
            <div className="h-[25px] bg-linear-to-b from-[#fafafa] to-[#e9e9e9] pl-0.5 pt-0.5">
                <button aria-label="Triangle" className="block">
                    <Ico size="size-4">
                        <path d="M8 2l6 12H2z" fill="#fdf000" stroke="none" />
                        <path d="M7 1h2v2H7zM1 13h2v2H1zM13 13h2v2h-2z" fill="#333" stroke="none" />
                    </Ico>
                </button>
            </div>
        </div>
    );
}

type Entry = { label: string; sub?: boolean; hot?: boolean; dim?: boolean; rule?: boolean };
const CONTEXT: Entry[] = [
    { label: "Show Toolbar", sub: true, rule: true },
    { label: "New Button..." },
    { label: "New Separator" },
    { label: "Edit Button", sub: true, hot: true, rule: true },
    { label: "New Tab" },
    { label: "Show or Hide Tabs", sub: true, rule: true },
    { label: "Size to content", dim: true },
    { label: "Properties...", rule: true },
    { label: "Lock Docked Windows" },
];

function ContextMenu() {
    return (
        <div className={`absolute left-[671px] top-[92px] w-[132px] border border-[#777] bg-[linear-gradient(to_right,#f1f1f1_18px,#fdfdfd_18px)] text-[8px] leading-[13px] text-[#222] shadow-[2px_2px_2px_#0006] ${UI}`}>
            {CONTEXT.map((e) => (
                <div key={e.label}>
                    <button
                        disabled={e.dim}
                        className={clsx(
                            "flex h-[15px] w-full items-center justify-between border pl-[22px] pr-[5px]",
                            e.hot ? "border-[#6aaee0] bg-[#c3e0fa]" : "border-transparent",
                            e.dim && "text-[#888]"
                        )}
                    >
                        {e.label}
                        {e.sub && <svg viewBox="0 0 4 6" className="h-[5px] w-[3px]" aria-hidden="true"><path d="M0 0l4 3-4 3z" fill="#111" /></svg>}
                    </button>
                    {e.rule && <div className="ml-[21px] h-[3px] border-b border-[#bbb]" />}
                </div>
            ))}
        </div>
    );
}

function ToolbarMenu() {
    return (
        <div className={`absolute left-[802px] top-[93px] flex h-[356px] w-[181px] border border-[#777] bg-white text-[8px] text-[#222] shadow-[2px_2px_2px_#0006] ${UI}`}>
            <div className="grid flex-1 grid-cols-1 grid-rows-[repeat(24,minmax(0,1fr))] bg-[linear-gradient(to_right,#f1f1f1_21px,#fff_21px)] pb-0.5">
                <div className="flex items-center gap-1 pl-[7px] text-[#3a5a86]">
                    Rhino Toolbars
                    <span className="mr-1 flex-1 border-t border-[#e2e2e2]" />
                </div>
                <button className="flex items-center gap-[17px] pl-[2px] font-bold">
                    <Ico size="size-[6px]"><path d="M1 8l5 5 9-10" strokeWidth="3" /></Ico>
                    00.DIGIT
                </button>
                {MENU_ICONS.map((m, i) => (
                    <button
                        key={m.name}
                        className={clsx("flex items-center gap-[5px] border pl-[9px]", i === 0 ? "border-[#6aaee0] bg-[#c3e0fa]" : "border-transparent")}
                    >
                        <Ico size="size-[10px]">{m.art}</Ico>
                        {m.name}
                    </button>
                ))}
            </div>
            <div className="ml-px flex w-[11px] flex-col items-center bg-[#f0f0f0] pb-1.5 pt-1.5">
                <Chevron up />
                <div className="mt-0.5 h-[61px] w-[10px] bg-[#c8c8c8]" />
                <div className="mt-auto"><Chevron /></div>
            </div>
        </div>
    );
}

export default function App() {
    return (
        <div className="relative flex min-h-screen flex-col overflow-hidden bg-[#e7e7e9]">
            <TitleBar />
            <MenuBar />
            <CommandLine />
            <Toolbar />
            <main className="flex flex-1">
                <div className="w-11 shrink-0 pr-1">
                    <div className="ml-[3px] mr-px mt-0.5 h-[3px] border-y border-[#c6c6c8]" />
                    <div className="grid h-[337px] w-[38px] grid-cols-2 grid-rows-[repeat(18,minmax(0,1fr))]">
                        {SIDE_ICONS.map((t) => <IconButton key={t.name} {...t} />)}
                    </div>
                </div>
                <div className="flex min-w-0 flex-1 flex-col">
                    <div className="grid flex-1 grid-cols-2 grid-rows-2 gap-0.5 bg-[#f2f2f2] pt-px">
                        <Viewport title="Top"><FlatGrid h="x" v="y" /></Viewport>
                        <Viewport title="Perspective" active><PerspectiveGrid /></Viewport>
                        <Viewport title="Front"><FlatGrid h="x" v="z" /></Viewport>
                        <Viewport title="Right"><FlatGrid h="y" v="z" /></Viewport>
                    </div>
                    <div className={`flex h-[18px] shrink-0 items-start text-[10px] leading-4 text-[#1e2a3c] ${UI}`}>
                        {["Perspective", "Top", "Front", "Right"].map((t, i) => (
                            <button
                                key={t}
                                className={clsx("h-[17px] rounded-bl-lg border-b border-r border-[#b5b9c2] pl-2 pr-[5px]", i === 0 ? "bg-white" : "bg-[#dfe4ee]")}
                            >
                                {t}
                            </button>
                        ))}
                        <button aria-label="New viewport tab" className="grid h-[17px] w-[27px] place-items-center border-b border-r border-[#c2c2c6]">
                            <svg viewBox="0 0 8 8" className="size-[7px]" fill="#fff" stroke="#777" aria-hidden="true"><path d="M3 1h2v2h2v2H5v2H3V5H1V3h2z" /></svg>
                        </button>
                    </div>
                </div>
                <div className="flex pl-[5px]">
                    <PropertiesPanel />
                </div>
            </main>
            <div className={`flex h-[27px] shrink-0 items-start gap-[5px] pl-[7px] pt-1 text-[8px] leading-[11px] text-[#333] ${GULIM}`}>
                {OSNAPS.map(([name, on], i) => (
                    <Tick key={name} label={name} checked={on} dim={i > 10}>{name}</Tick>
                ))}
            </div>
            <StatusBar />
            <Taskbar />

            <FloatingToolbar />
            <ContextMenu />
            <ToolbarMenu />
            <svg viewBox="0 0 8 13" className="pointer-events-none absolute left-[312px] top-[156px] h-[13px] w-2" aria-hidden="true">
                <path d="M.500.500v10l2.500-2 1.500 4 1.500-.7-1.600-3.800H7.500z" fill="#fff" stroke="#222" strokeWidth=".8" />
            </svg>
        </div>
    );
}
